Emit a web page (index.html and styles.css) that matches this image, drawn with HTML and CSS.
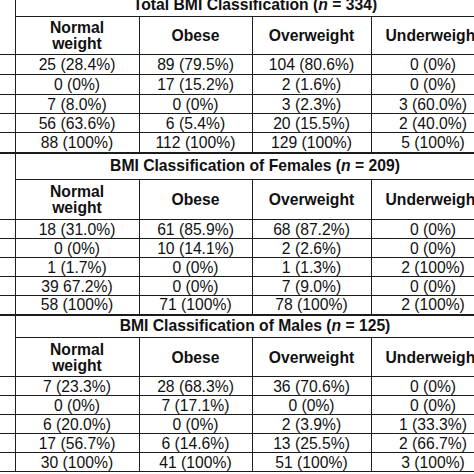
FILE: index.html
```html
<!DOCTYPE html>
<html lang="en">
<head>
<meta charset="utf-8">
<title>BMI Classification</title>
<link rel="stylesheet" href="styles.css">
</head>
<body>
<table class="bmi">
  <colgroup>
    <col class="c-label">
    <col class="c-normal">
    <col class="c-obese">
    <col class="c-over">
    <col class="c-under">
  </colgroup>
  <tbody class="sec sec1">
    <tr class="title-row"><td class="label" rowspan="2"></td><th colspan="4" class="title">Total BMI Classification (<i>n</i> = 334)</th></tr>
    <tr class="head-row"><th>Normal<br>weight</th><th>Obese</th><th>Overweight</th><th>Underweight</th></tr>
    <tr class="r1"><td class="label"></td><td>25 (28.4%)</td><td>89 (79.5%)</td><td>104 (80.6%)</td><td>0 (0%)</td></tr>
    <tr class="r2"><td class="label"></td><td>0 (0%)</td><td>17 (15.2%)</td><td>2 (1.6%)</td><td>0 (0%)</td></tr>
    <tr class="r3"><td class="label"></td><td>7 (8.0%)</td><td>0 (0%)</td><td>3 (2.3%)</td><td>3 (60.0%)</td></tr>
    <tr class="r4"><td class="label"></td><td>56 (63.6%)</td><td>6 (5.4%)</td><td>20 (15.5%)</td><td>2 (40.0%)</td></tr>
    <tr class="r5"><td class="label"></td><td>88 (100%)</td><td>112 (100%)</td><td>129 (100%)</td><td>5 (100%)</td></tr>
  </tbody>
  <tbody class="sec sec2">
    <tr class="title-row"><td class="label" rowspan="2"></td><th colspan="4" class="title">BMI Classification of Females (<i>n</i> = 209)</th></tr>
    <tr class="head-row"><th>Normal<br>weight</th><th>Obese</th><th>Overweight</th><th>Underweight</th></tr>
    <tr><td class="label"></td><td>18 (31.0%)</td><td>61 (85.9%)</td><td>68 (87.2%)</td><td>0 (0%)</td></tr>
    <tr><td class="label"></td><td>0 (0%)</td><td>10 (14.1%)</td><td>2 (2.6%)</td><td>0 (0%)</td></tr>
    <tr><td class="label"></td><td>1 (1.7%)</td><td>0 (0%)</td><td>1 (1.3%)</td><td>2 (100%)</td></tr>
    <tr><td class="label"></td><td>39 67.2%)</td><td>0 (0%)</td><td>7 (9.0%)</td><td>0 (0%)</td></tr>
    <tr><td class="label"></td><td>58 (100%)</td><td>71 (100%)</td><td>78 (100%)</td><td>2 (100%)</td></tr>
  </tbody>
  <tbody class="sec sec3">
    <tr class="title-row"><td class="label" rowspan="2"></td><th colspan="4" class="title">BMI Classification of Males (<i>n</i> = 125)</th></tr>
    <tr class="head-row"><th>Normal<br>weight</th><th>Obese</th><th>Overweight</th><th>Underweight</th></tr>
    <tr><td class="label"></td><td>7 (23.3%)</td><td>28 (68.3%)</td><td>36 (70.6%)</td><td>0 (0%)</td></tr>
    <tr><td class="label"></td><td>0 (0%)</td><td>7 (17.1%)</td><td>0 (0%)</td><td>0 (0%)</td></tr>
    <tr><td class="label"></td><td>6 (20.0%)</td><td>0 (0%)</td><td>2 (3.9%)</td><td>1 (33.3%)</td></tr>
    <tr><td class="label"></td><td>17 (56.7%)</td><td>6 (14.6%)</td><td>13 (25.5%)</td><td>2 (66.7%)</td></tr>
    <tr><td class="label"></td><td>30 (100%)</td><td>41 (100%)</td><td>51 (100%)</td><td>3 (100%)</td></tr>
  </tbody>
</table>
</body>
</html>
```

FILE: styles.css
```css
html, body {
  margin: 0;
  padding: 0;
  background: #ffffff;
  overflow: hidden;
}

body {
  width: 474px;
  height: 474px;
  font-family: "Liberation Sans", Arial, Helvetica, sans-serif;
  color: #111111;
}

.bmi {
  border-collapse: collapse;
  table-layout: fixed;
  width: 495px;
  margin-top: -7px;
  font-size: 15.7px;
  line-height: 1;
}

.c-label { width: 15px; }
.c-normal { width: 124px; }
.c-obese { width: 113px; }
.c-over { width: 119px; }
.c-under { width: 124px; }

.bmi td,
.bmi th {
  padding: 1px 0 0;
  text-align: center;
  vertical-align: middle;
  border: 1px solid #1c1c1c;
  white-space: nowrap;
}

.bmi th {
  font-weight: bold;
  padding-top: 0;
}

.bmi th i {
  font-style: italic;
}

.bmi .label {
  border-left: none;
}

.bmi tr {
  height: 19px;
}

.sec1 tr.r1,
.sec1 tr.r2,
.sec1 tr.r5 {
  height: 20px;
}

.sec1 .title-row { height: 23px; }
.sec2 .title-row { height: 27px; }
.sec3 .title-row { height: 23px; }

.bmi .head-row {
  height: 38px;
}

.bmi .sec2 .head-row {
  height: 40px;
}

.bmi .sec3 .head-row {
  height: 39px;
}

.head-row th {
  line-height: 16px;
  padding-top: 1px;
}

.sec2 > tr:first-child > td,
.sec2 > tr:first-child > th,
.sec3 > tr:first-child > td,
.sec3 > tr:first-child > th {
  border-top: 2px solid #1c1c1c;
}
```
